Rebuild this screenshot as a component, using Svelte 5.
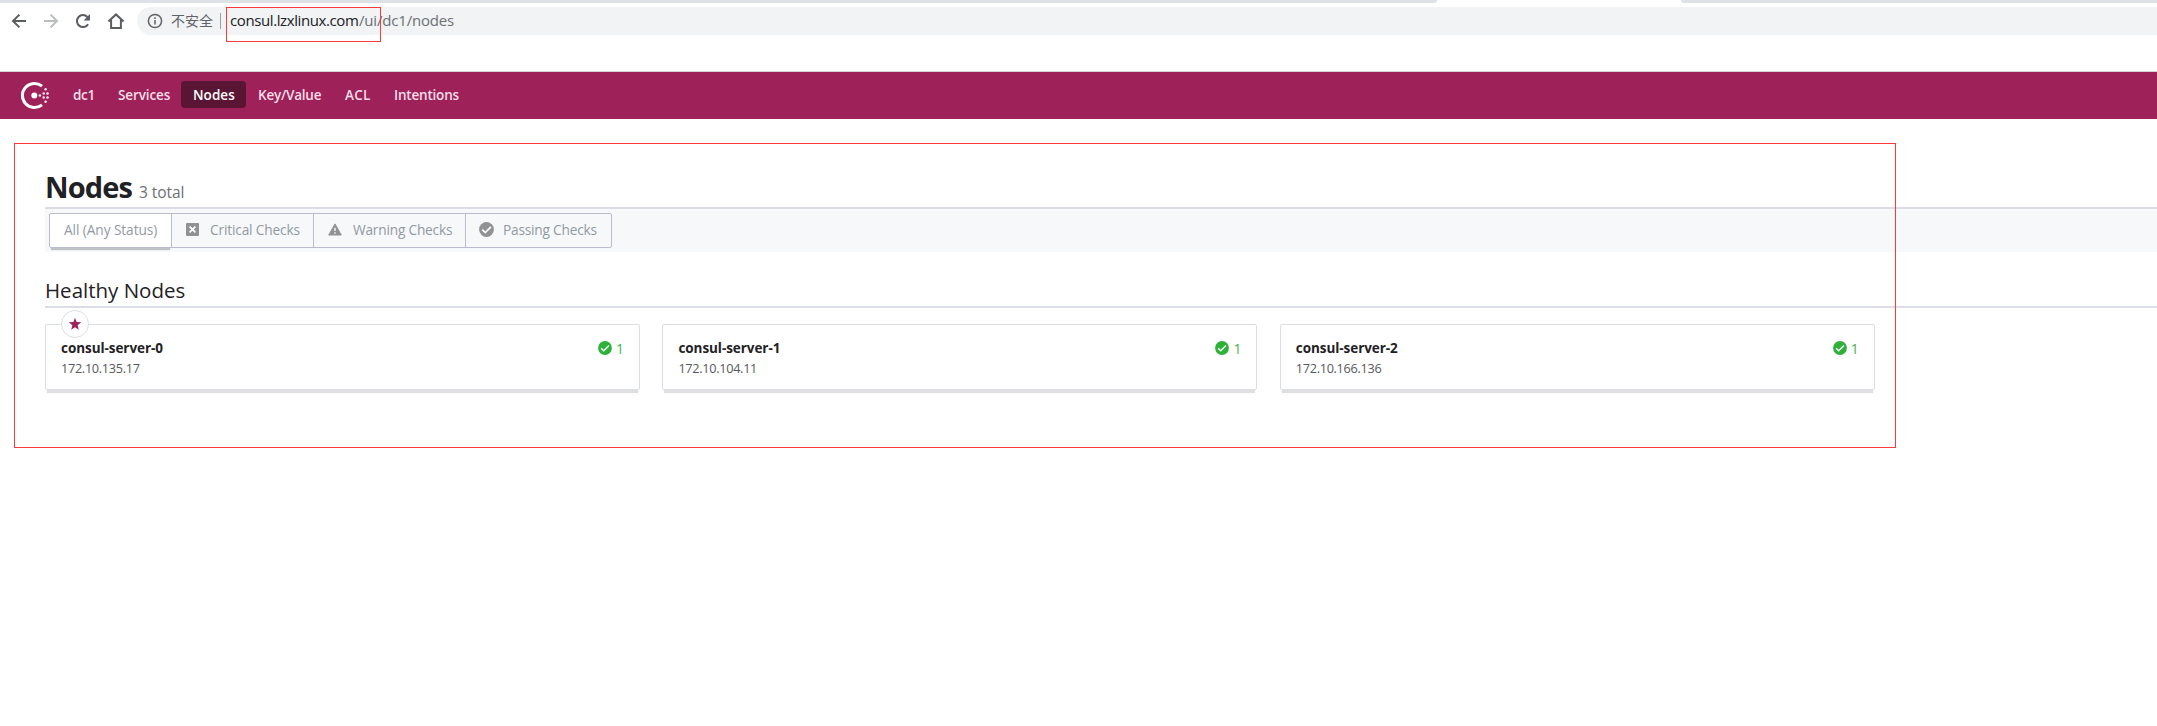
<script>
  const nav = [
    { label: 'dc1', w: 45, ls: -0.35 },
    { label: 'Services', w: 75, ls: -0.12 },
    { label: 'Nodes', w: 65, ls: 0.05, active: true },
    { label: 'Key/Value', w: 87, ls: -0.22 },
    { label: 'ACL', w: 49, ls: 0.3 },
    { label: 'Intentions', w: 88, ls: -0.2 }
  ];
  const filters = [
    { label: 'All (Any Status)', w: 123, ls: -0.08, active: true },
    { label: 'Critical Checks', w: 143, ls: -0.15, icon: 'critical' },
    { label: 'Warning Checks', w: 153, ls: -0.2, icon: 'warning' },
    { label: 'Passing Checks', w: 147, ls: -0.2, icon: 'passing' }
  ];
  const nodes = [
    { name: 'consul-server-0', ip: '172.10.135.17', checks: 1, leader: true },
    { name: 'consul-server-1', ip: '172.10.104.11', checks: 1 },
    { name: 'consul-server-2', ip: '172.10.166.136', checks: 1 }
  ];
  const logoDots = [
    [39.9, 95.5, 1.25], [43.7, 93.5, 1.25], [43.7, 97.5, 1.25], [47.5, 93.6, 1.25],
    [47.5, 97.4, 1.25], [45.6, 89.2, 1.25], [45.6, 101.7, 1.25]
  ];
</script>

<div class="page">
  <div class="tabs"><i class="left"></i><i class="right"></i></div>

  <div class="toolbar">
    <div class="controls">
      <svg width="16" height="16" viewBox="0 0 16 16" class="dark"><path d="M15 8H2.2M8.4 1.6 2 8l6.4 6.4" /></svg>
      <svg width="16" height="16" viewBox="0 0 16 16" class="light"><path d="M1 8h12.8M7.6 1.6 14 8l-6.4 6.4" /></svg>
      <svg width="16" height="16" viewBox="0 0 16 16" class="dark"><path d="M13.1 11.2A6 6 0 1 1 12.4 4" /><path d="M15 1v6.4H8.6z" class="solid" /></svg>
      <svg width="18" height="16" viewBox="0 0 18 16" class="dark"><path d="M1.4 8.6 9 1.4l7.6 7.2M4.1 7v8h9.8V7" /></svg>
    </div>
    <div class="omnibox">
      <svg width="16" height="16" viewBox="0 0 16 16" class="info"><circle cx="8" cy="8" r="6.6" /><path d="M8 7v4.6M8 4.2v1.7" /></svg>
      <span class="insecure">不安全</span>
      <span class="sep"></span>
      <span class="host">consul.lzxlinux.com</span><span class="path">/ui/dc1/nodes</span>
    </div>
  </div>

  <header>
    <svg class="logo" width="30" height="30" viewBox="20 80 30 30">
      <path d="M42 86.2A12 12 0 1 0 42 104.8" fill="none" stroke="#fff" stroke-width="3" />
      <circle cx="34.3" cy="95.5" r="3" fill="#fff" />
      {#each logoDots as [cx, cy, r]}<circle {cx} {cy} {r} fill="#fbe9f1" />{/each}
    </svg>
    <nav>
      {#each nav as n}
        <a class:active={n.active} style="width:{n.w}px;letter-spacing:{n.ls}px">{n.label}</a>
      {/each}
    </nav>
  </header>

  <main>
    <div class="title"><h1>Nodes</h1><span>3 total</span></div>
    <div class="filterbar">
      <div class="filters">
        {#each filters as f}
          <div class="filter" class:active={f.active} style="width:{f.w}px">
            {#if f.icon === 'critical'}
              <svg width="13" height="13" viewBox="0 0 13 13"><rect width="13" height="13" rx="1" fill="#919295" /><path d="m3.6 3.6 5.8 5.8m0-5.8L3.6 9.4" fill="none" stroke="#fff" stroke-width="1.7" /></svg>
            {:else if f.icon === 'warning'}
              <svg width="14" height="13" viewBox="0 0 14 13"><path d="M7 .9 13.3 12H.7z" fill="#919295" stroke="#919295" stroke-linejoin="round" /><path d="M7 4.7v3.2M7 9.2v1.5" fill="none" stroke="#fff" stroke-width="1.3" /></svg>
            {:else if f.icon === 'passing'}
              <svg width="15" height="15" viewBox="0 0 15 15"><circle cx="7.5" cy="7.5" r="7.4" fill="#919295" /><path d="m3.3 7.6 3 3 5.6-5.7" fill="none" stroke="#fff" stroke-width="1.7" /></svg>
            {/if}
            <span style="letter-spacing:{f.ls}px">{f.label}</span>
          </div>
        {/each}
      </div>
    </div>

    <h2>Healthy Nodes</h2>
    <div class="cards">
      {#each nodes as n}
        <div class="card">
          {#if n.leader}
            <div class="leader"><svg width="14" height="14" viewBox="0 0 14 14"><path d="m7 .8 1.6 4.3 4.6.2-3.6 2.9 1.2 4.5L7 10.2l-3.8 2.5 1.2-4.5L.8 5.3l4.6-.2z" fill="#9e2159" /></svg></div>
          {/if}
          <div class="text"><strong>{n.name}</strong><span>{n.ip}</span></div>
          <div class="status">
            <svg width="14" height="14" viewBox="0 0 14 14"><circle cx="7" cy="7" r="6.9" fill="#2eb039" /><path d="m3.1 7.2 2.6 2.6 5.2-5.3" fill="none" stroke="#fff" stroke-width="1.4" /></svg>
            <span>{n.checks}</span>
          </div>
        </div>
      {/each}
    </div>
  </main>

  <div class="mark url"></div>
  <div class="mark region"></div>
</div>

<style>
  :global(body) { background: #fff; }
  .page { position: relative; width: 2157px; height: 726px; overflow: hidden; box-sizing: border-box; font-family: 'Open Sans', 'Noto Sans CJK SC', sans-serif; background: #fff; }
  .page * { box-sizing: border-box; }
  .page svg { display: block; flex: none; }

  .tabs { display: flex; justify-content: space-between; height: 3px; }
  .tabs i { background: #dee1e6; }
  .left { width: 1437px; border-bottom-right-radius: 3px; }
  .right { width: 476px; border-bottom-left-radius: 3px; }

  .toolbar { display: flex; height: 69px; padding-top: 4px; border-bottom: 1px solid #d4d5d8; }
  .controls { display: flex; align-items: center; gap: 16px; width: 137px; height: 28px; padding-left: 11px; }
  .controls path { fill: none; stroke-width: 2; }
  .dark path { stroke: #5a5d61; }
  .light path { stroke: #bcbdbf; }
  .controls path.solid { fill: #5a5d61; stroke: none; }
  .omnibox { display: flex; align-items: center; flex: 1; height: 28px; padding-left: 10px; border-radius: 14px 0 0 14px; background: #f1f3f4; font-size: 15px; line-height: 26px; white-space: nowrap; }
  .info circle, .info path { fill: none; stroke: #5f6368; stroke-width: 1.5; }
  .insecure { width: 42px; margin: 0 0 2px 8px; font-family: 'Noto Sans CJK SC', sans-serif; font-size: 14px; color: #5f6368; }
  .sep { width: 1px; height: 16px; margin: 0 9px 0 7px; background: #9b9ea2; }
  .host { width: 129px; color: #202124; letter-spacing: -0.4px; margin-bottom: 2px; }
  .path { color: #6c7074; letter-spacing: -0.18px; margin-bottom: 2px; }

  header { display: flex; align-items: flex-start; height: 47px; padding: 8px 0 0 20px; background: #9e2159; }
  nav { display: flex; margin: 1px 0 0 11px; }
  nav a { height: 27px; padding-left: 12px; border-radius: 4px; font-size: 13.5px; font-weight: 600; line-height: 29px; color: #f6dfe9; white-space: nowrap; }
  nav a.active { background: #5a1434; color: #fff; }

  main { padding-left: 45px; }
  .title { display: flex; align-items: baseline; height: 90px; padding: 50px 0 0; border-bottom: 2px solid #dbdde5; }
  h1 { width: 94px; margin: 0; font-size: 29px; line-height: 36px; font-weight: 700; letter-spacing: -0.85px; color: #1f2124; }
  .title span { font-size: 15.5px; line-height: 20px; letter-spacing: -0.05px; color: #6b6f75; }
  .filterbar { height: 43px; padding: 4px 0 0 4px; background: #f7f8fa; }
  .filters { display: flex; width: 565px; height: 35px; }
  .filter { display: flex; align-items: center; flex: none; height: 35px; margin-right: -1px; border: 1px solid #b9bccb; padding-left: 14px; font-size: 13.7px; line-height: 31px; color: #919aa3; white-space: nowrap; }
  .filter span { margin-bottom: 2px; }
  .filter:first-child { border-radius: 2px 0 0 2px; }
  .filter:last-child { border-radius: 0 2px 2px 0; }
  .filter.active { background: #fff; box-shadow: 0 4px 1px -2px #bfc1c4; }
  .filter svg { margin: 0 11px 3px 0; }
  .filter:last-child svg { margin-right: 9px; margin-left: -1px; }

  h2 { height: 56px; margin: 0; padding: 22px 0 0 0; border-bottom: 2px solid #dbdfe5; font-size: 20.5px; line-height: 32px; font-weight: 400; color: #1f2124; }
  .cards { display: grid; grid-template-columns: repeat(3, 595px); column-gap: 22.4px; padding-top: 16px; }
  .card { position: relative; display: flex; justify-content: space-between; height: 66px; padding: 13px 14px 0 15px; border: 1px solid #dbdde5; border-radius: 2px; background: #fff; box-shadow: 0 5px 1px -2px #dfdfdf; }
  .leader { position: absolute; left: 15px; top: -15px; display: grid; place-items: center; width: 28px; height: 28px; border: 1px solid #dcdee6; border-radius: 50%; background: #fff; }
  .text { display: flex; flex-direction: column; }
  .text strong { font-size: 13.5px; line-height: 20px; letter-spacing: -0.06px; color: #1f2124; }
  .text span { font-size: 12.7px; line-height: 20px; letter-spacing: -0.3px; color: #55585c; }
  .status { display: flex; align-items: center; gap: 4px; width: 27px; height: 20px; color: #3fb54a; font-size: 14px; line-height: 20px; }
  .status span { margin-top: 2px; }

  .mark { position: absolute; border: 1px solid #fb3b3b; pointer-events: none; }
  .url { left: 226px; top: 7px; width: 155px; height: 35px; }
  .region { left: 14px; top: 143px; width: 1882px; height: 305px; }
</style>
